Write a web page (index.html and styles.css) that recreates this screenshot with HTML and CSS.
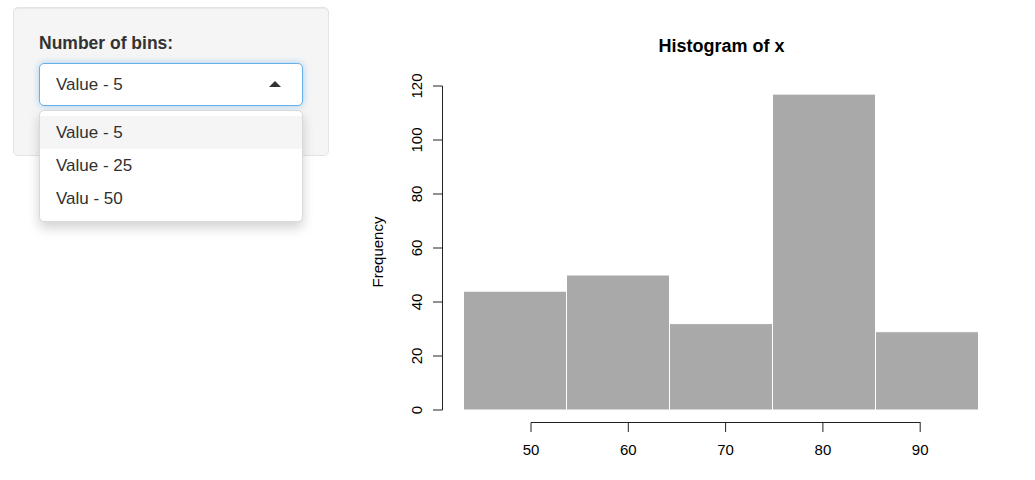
FILE: index.html
```html
<!DOCTYPE html>
<html lang="en">
<head>
    <meta charset="UTF-8">
    <title>Histogram</title>
    <link rel="stylesheet" href="styles.css">
</head>
<body>
<div class="page">
    <div class="sidebar">
        <label class="bins_label">Number of bins:</label>
        <div class="bins_select">
            <div class="select_box">
                <span>Value - 5</span>
                <span class="caret"></span>
            </div>
            <div class="select_menu">
                <div class="option active">Value - 5</div>
                <div class="option">Value - 25</div>
                <div class="option">Valu - 50</div>
            </div>
        </div>
    </div>

    <svg class="plot" width="695" height="480" viewBox="0 0 695 480">
        <text class="main" x="381.5" y="52" text-anchor="middle">Histogram of x</text>

        <!-- bars -->
        <g class="bars">
            <rect x="123.5" y="291.2" width="103" height="118.8"/>
            <rect x="226.5" y="275" width="103" height="135"/>
            <rect x="329.5" y="323.6" width="103" height="86.4"/>
            <rect x="432.5" y="94.1" width="103" height="315.9"/>
            <rect x="535.5" y="331.7" width="103" height="78.3"/>
        </g>

        <!-- y axis -->
        <g class="axis">
            <line x1="102.5" y1="86" x2="102.5" y2="410"/>
            <line x1="93" y1="86" x2="102.5" y2="86"/>
            <line x1="93" y1="140" x2="102.5" y2="140"/>
            <line x1="93" y1="194" x2="102.5" y2="194"/>
            <line x1="93" y1="248" x2="102.5" y2="248"/>
            <line x1="93" y1="302" x2="102.5" y2="302"/>
            <line x1="93" y1="356" x2="102.5" y2="356"/>
            <line x1="93" y1="410" x2="102.5" y2="410"/>
        </g>
        <g class="tick_text" text-anchor="middle">
            <text transform="translate(81.5 86) rotate(-90)">120</text>
            <text transform="translate(81.5 140) rotate(-90)">100</text>
            <text transform="translate(81.5 194) rotate(-90)">80</text>
            <text transform="translate(81.5 248) rotate(-90)">60</text>
            <text transform="translate(81.5 302) rotate(-90)">40</text>
            <text transform="translate(81.5 356) rotate(-90)">20</text>
            <text transform="translate(81.5 410) rotate(-90)">0</text>
        </g>
        <text class="tick_text" text-anchor="middle" transform="translate(43 252) rotate(-90)">Frequency</text>

        <!-- x axis -->
        <g class="axis">
            <line x1="191" y1="422.5" x2="580.5" y2="422.5"/>
            <line x1="191" y1="422.5" x2="191" y2="432"/>
            <line x1="288.3" y1="422.5" x2="288.3" y2="432"/>
            <line x1="385.6" y1="422.5" x2="385.6" y2="432"/>
            <line x1="482.9" y1="422.5" x2="482.9" y2="432"/>
            <line x1="580.2" y1="422.5" x2="580.2" y2="432"/>
        </g>
        <g class="tick_text" text-anchor="middle">
            <text x="191" y="455">50</text>
            <text x="288.3" y="455">60</text>
            <text x="385.6" y="455">70</text>
            <text x="482.9" y="455">80</text>
            <text x="580.2" y="455">90</text>
        </g>
    </svg>
</div>
</body>
</html>
```

FILE: styles.css
```css
body{
    margin: 0;
    background: white;
    font-family: "Liberation Sans", Arial, sans-serif;
    color: #333333;
}
.page{
    display: flex;
    align-items: flex-start;
}

/*左侧灰色面板*/
.sidebar{
    width: 316px;
    box-sizing: border-box;
    margin: 7px 0 0 13px;
    padding: 23px 25px 25px;
    background: #F5F5F5;
    border: 1px solid #E3E3E3;
    border-radius: 5px;
    box-shadow: inset 0 1px 1px rgba(0,0,0,.05);
}
.bins_label{
    display: block;
    font-size: 17.5px;
    font-weight: bold;
    line-height: 25px;
    margin-bottom: 7px;
}
.bins_select{
    position: relative;
    margin-bottom: 24px;
}
.select_box{
    height: 43px;
    box-sizing: border-box;
    display: flex;
    align-items: center;
    justify-content: space-between;
    padding: 0 21px 0 16px;
    background: white;
    border: 1px solid #66AFE9;
    border-radius: 5px;
    box-shadow: 0 0 7px rgba(102,175,233,.55);
    font-size: 17px;
}
/*向上的小三角*/
.caret{
    width: 0;
    height: 0;
    border-left: 6px solid transparent;
    border-right: 6px solid transparent;
    border-bottom: 6px solid #333333;
    margin-top: -2px;
}

/*下拉菜单*/
.select_menu{
    position: absolute;
    top: 47px;
    left: 0;
    right: 0;
    padding: 5px 0 6px;
    background: white;
    border: 1px solid #D9D9D9;
    border-radius: 5px;
    box-shadow: 0 6px 12px rgba(0,0,0,.175);
    z-index: 10;
}
.option{
    height: 33px;
    line-height: 33px;
    padding-left: 16px;
    font-size: 17px;
    color: #303030;
}
.option.active{
    background: #F5F5F5;
}

/*直方图*/
.plot{
    display: block;
    margin-left: 11px;
}
.plot text{
    font-family: "Liberation Sans", Arial, sans-serif;
    fill: black;
}
.main{
    font-size: 18px;
    font-weight: bold;
}
.tick_text{
    font-size: 15px;
}
.bars rect{
    fill: #A9A9A9;
    stroke: white;
    stroke-width: 1;
}
.axis line{
    stroke: #222222;
    stroke-width: 1;
}
```
